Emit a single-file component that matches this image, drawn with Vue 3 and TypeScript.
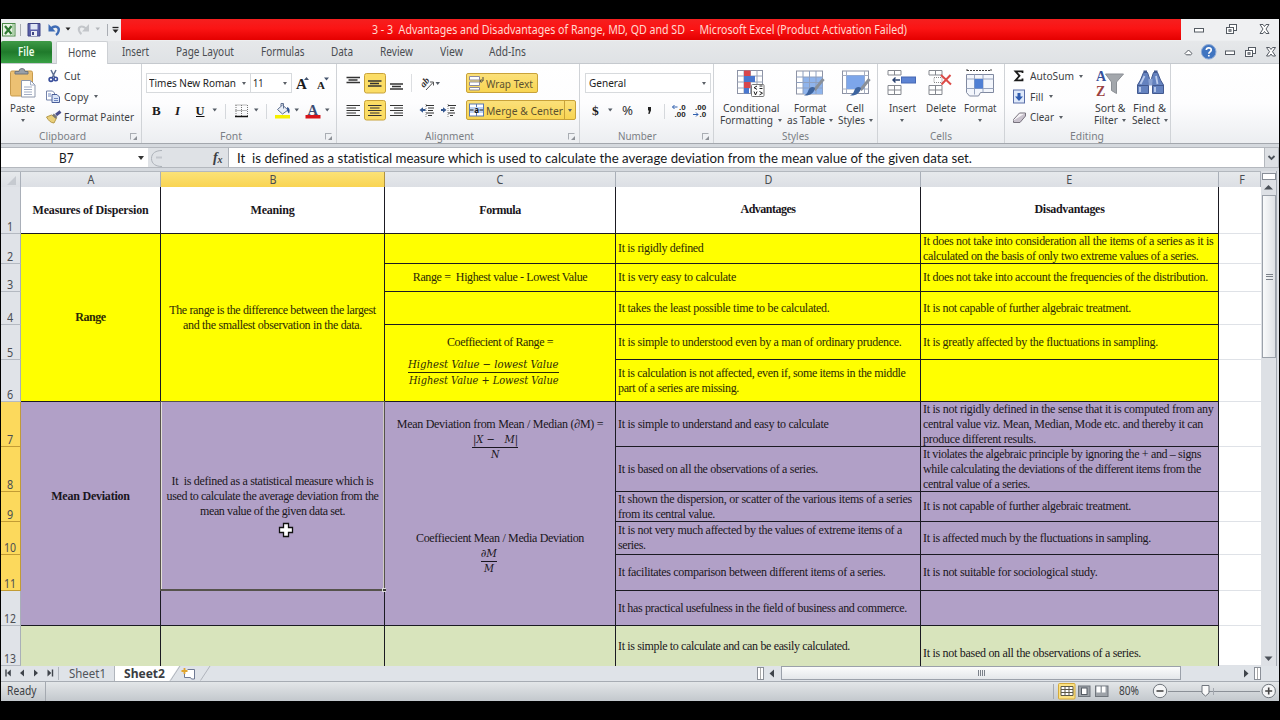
<script setup lang="ts">
type Align = 'center' | 'left'
interface Line { text: string; w: number }
interface Cell {
  area: string
  tone: string
  align: Align
  lines: Line[]
  bold?: boolean
  extra?: string
}

const ln = (text: string, w: number): Line => ({ text, w })
const cell = (area: string, tone: string, align: Align, lines: Line[], extra = '', bold = false): Cell =>
  ({ area, tone, align, lines, extra, bold })

/* Spreads the letters of a label so that it takes a given width in pixels. */
const vFit = {
  mounted(el: HTMLElement, binding: { value: number }) {
    const n = (el.textContent || '').length
    if (!n || !binding.value) return
    const natural = el.getBoundingClientRect().width
    el.style.letterSpacing = ((binding.value - natural) / n).toFixed(3) + 'px'
  },
}

/* Condenses the glyphs of a label to a given width in pixels. */
const vSqueeze = {
  mounted(el: HTMLElement, binding: { value: number }) {
    const natural = el.getBoundingClientRect().width
    if (!natural || !binding.value) return
    el.style.transformOrigin = '0 50%'
    el.style.transform = `scaleX(${(binding.value / natural).toFixed(4)})`
    el.style.marginRight = (binding.value - natural).toFixed(2) + 'px'
  },
}

const caption = '3 - 3  Advantages and Disadvantages of Range, MD, QD and SD  -  Microsoft Excel (Product Activation Failed)'
const formulaText = 'It  is defined as a statistical measure which is used to calculate the average deviation from the mean value of the given data set.'
const deviation = '|X −   M|'

const tabs = [
  { name: 'Insert', w: 27, cls: 't-insert' },
  { name: 'Page Layout', w: 58, cls: 't-page' },
  { name: 'Formulas', w: 43.5, cls: 't-formulas' },
  { name: 'Data', w: 22, cls: 't-data' },
  { name: 'Review', w: 33, cls: 't-review' },
  { name: 'View', w: 23, cls: 't-view' },
  { name: 'Add-Ins', w: 37, cls: 't-addins' },
]

const columns = [
  { name: 'A', on: false }, { name: 'B', on: true }, { name: 'C', on: false },
  { name: 'D', on: false }, { name: 'E', on: false }, { name: 'F', on: false },
]
const rows = Array.from({ length: 13 }, (_, i) => ({ n: i + 1, on: i >= 6 && i <= 10 }))

const cells: Cell[] = [
  cell('1 / 2 / 2 / 3', 'white', 'center', [ln('Measures of Dispersion', 116)], '', true),
  cell('1 / 3 / 2 / 4', 'white', 'center', [ln('Meaning', 44)], '', true),
  cell('1 / 4 / 2 / 5', 'white', 'center', [ln('Formula', 41.5)], '', true),
  cell('1 / 5 / 2 / 6', 'white', 'center', [ln('Advantages', 55)], 'lift', true),
  cell('1 / 6 / 2 / 7', 'white', 'center', [ln('Disadvantages', 70)], 'lift', true),

  cell('2 / 2 / 7 / 3', 'yellow', 'center', [ln('Range', 30.5)], '', true),
  cell('2 / 3 / 7 / 4', 'yellow', 'center', [
    ln('The range is the difference between the largest', 206.5),
    ln('and the smallest observation in the data.', 179)]),
  cell('2 / 4 / 3 / 5', 'yellow', 'center', []),
  cell('3 / 4 / 4 / 5', 'yellow', 'center', [ln('Range =  Highest value - Lowest Value', 174.5)]),
  cell('4 / 4 / 5 / 5', 'yellow', 'center', []),

  cell('2 / 5 / 3 / 6', 'yellow', 'left', [ln('It is rigidly defined', 85.5)]),
  cell('3 / 5 / 4 / 6', 'yellow', 'left', [ln('It is very easy to calculate', 118)]),
  cell('4 / 5 / 5 / 6', 'yellow', 'left', [ln('It takes the least possible time to be calculated.', 211.5)]),
  cell('5 / 5 / 6 / 6', 'yellow', 'left', [ln('It is simple to understood even by a man of ordinary prudence.', 283.5)]),
  cell('6 / 5 / 7 / 6', 'yellow', 'left', [
    ln('It is calculation is not affected, even if, some items in the middle', 287.6),
    ln('part of a series are missing.', 121)]),

  cell('2 / 6 / 3 / 7', 'yellow', 'left', [
    ln('It does not take into consideration all the items of a series as it is', 290.5),
    ln('calculated on the basis of only two extreme values of a series.', 275.5)]),
  cell('3 / 6 / 4 / 7', 'yellow', 'left', [ln('It does not take into account the frequencies of the distribution.', 285)]),
  cell('4 / 6 / 5 / 7', 'yellow', 'left', [ln('It is not capable of further algebraic treatment.', 208)]),
  cell('5 / 6 / 6 / 7', 'yellow', 'left', [ln('It is greatly affected by the fluctuations in sampling.', 235)]),
  cell('6 / 6 / 7 / 7', 'yellow', 'left', []),

  cell('7 / 2 / 12 / 3', 'purple', 'center', [ln('Mean Deviation', 78.5)], 'open', true),
  cell('12 / 2 / 13 / 3', 'purple', 'center', []),
  cell('7 / 3 / 12 / 4', 'purple', 'center', [
    ln('It  is defined as a statistical measure which is', 202),
    ln('used to calculate the average deviation from the', 212),
    ln('mean value of the given data set.', 145)], 'open'),
  cell('12 / 3 / 13 / 4', 'purple', 'center', []),

  cell('7 / 5 / 8 / 6', 'purple', 'left', [ln('It is simple to understand and easy to calculate', 210.5)]),
  cell('8 / 5 / 9 / 6', 'purple', 'left', [ln('It is based on all the observations of a series.', 200)]),
  cell('9 / 5 / 10 / 6', 'purple', 'left', [
    ln('It shown the dispersion, or scatter of the various items of a series', 294),
    ln('from its central value.', 97)]),
  cell('10 / 5 / 11 / 6', 'purple', 'left', [
    ln('It is not very much affected by the values of extreme items of a', 284),
    ln('series.', 27.5)]),
  cell('11 / 5 / 12 / 6', 'purple', 'left', [ln('It facilitates comparison between different items of a series.', 267.5)]),
  cell('12 / 5 / 13 / 6', 'purple', 'left', [ln('It has practical usefulness in the field of business and commerce.', 289)]),

  cell('7 / 6 / 8 / 7', 'purple', 'left', [
    ln('It is not rigidly defined in the sense that it is computed from any', 290.5),
    ln('central value viz. Mean, Median, Mode etc. and thereby it can', 280),
    ln('produce different results.', 113)]),
  cell('8 / 6 / 9 / 7', 'purple', 'left', [
    ln('It violates the algebraic principle by ignoring the + and – signs', 278),
    ln('while calculating the deviations of the different items from the', 278),
    ln('central value of a series.', 107)]),
  cell('9 / 6 / 10 / 7', 'purple', 'left', [ln('It is not capable of further algebraic treatment.', 208)]),
  cell('10 / 6 / 11 / 7', 'purple', 'left', [ln('It is affected much by the fluctuations in sampling.', 228)]),
  cell('11 / 6 / 12 / 7', 'purple', 'left', [ln('It is not suitable for sociological study.', 174.5)]),
  cell('12 / 6 / 13 / 7', 'purple', 'left', []),

  cell('13 / 2 / 14 / 3', 'green', 'center', [], 'open'),
  cell('13 / 3 / 14 / 4', 'green', 'center', [], 'open'),
  cell('13 / 4 / 14 / 5', 'green', 'center', [], 'open'),
  cell('13 / 5 / 14 / 6', 'green', 'left', [ln('It is simple to calculate and can be easily calculated.', 232)], 'open'),
  cell('13 / 6 / 14 / 7', 'green', 'left', [ln('It is not based on all the observations of a series.', 218)], 'open low'),
]
</script>

<template>
  <div class="screen">
    <div class="window">
      <!-- Title bar -->
      <div class="titlebar">
        <div class="qat">
          <svg width="120" height="21" viewBox="1 19 120 21">
            <rect x="2.5" y="23.500" width="12.500" height="12.500" fill="#e9f3e6" stroke="#4c8a4a" />
            <path d="M5 26l6.500 8M11.500 26L5 34" stroke="#2f7a33" stroke-width="2.200" fill="none" />
            <path d="M13 24v12" stroke="#9cc79a" stroke-width="1.500" />
            <path d="M20.500 24v12M107.500 24v12" stroke="#a9adb3" />
            <path d="M28 23.500h12v12.500H28z" fill="#5a5fa8" stroke="#3f4585" />
            <rect x="30.500" y="24" width="7" height="5.500" fill="#dfe6f5" />
            <rect x="31" y="31" width="6" height="5" fill="#e9ecf4" />
            <rect x="32" y="32" width="2" height="3" fill="#3f4585" />
            <path d="M51 28.500c4-3.500 9-2 7.500 3-.4 1.400-1.400 2.700-2.500 3.500" stroke="#3f6cb5" stroke-width="2.400" fill="none" />
            <path d="M48.500 24v7.500h7z" fill="#3f6cb5" />
            <path d="M65.500 27.500h5l-2.500 3z" fill="#222" />
            <path d="M86 28.500c-4-3.500-8-2-7 2 .4 1.400 1.300 2.700 2.500 3.500" stroke="#c3c6ca" stroke-width="2.200" fill="none" />
            <path d="M89 24v7.500h-7z" fill="#c3c6ca" />
            <path d="M95.500 27.500h4.500l-2.300 3z" fill="#b4b7bb" />
            <path d="M112.500 27.500h6" stroke="#222" stroke-width="1.300" />
            <path d="M112.500 29.500h6l-3 3.500z" fill="#222" />
          </svg>
        </div>
        <div class="caption"><span v-squeeze="535">{{ caption }}</span></div>
        <svg class="winbtns" width="98" height="21" viewBox="1180 19 98 21" fill="none" stroke="#555b63">
          <rect x="1193.500" y="28.500" width="9" height="3.500" fill="#fff" />
          <rect x="1228.500" y="24.500" width="7" height="6" fill="#fff" />
          <rect x="1225.500" y="27.500" width="7" height="6" fill="#fff" /><rect x="1228" y="29.700" width="2" height="1.600" />
          <path d="M1259 24.500h3l1.500 2 1.500-2h3l-3 4.500 3 4.500h-3l-1.500-2-1.500 2h-3l3-4.500z" fill="#fff" />
        </svg>
      </div>

      <!-- Ribbon tabs -->
      <div class="tabs">
        <div class="file"><span v-squeeze="16.500">File</span></div>
        <div class="home"><span v-squeeze="28">Home</span></div>
        <div v-for="t in tabs" :key="t.name" class="tab" :class="t.cls"><span v-squeeze="t.w">{{ t.name }}</span></div>
        <svg class="tabbtns" width="98" height="23" viewBox="1180 41 98 23" fill="none" stroke="#555b63">
          <path d="M1184 53.500l3.500-3.500 3.500 3.500-1.300 1.300h-4.400z" fill="#fff" />
          <circle cx="1207.700" cy="51.800" r="7.300" fill="#3f74c0" stroke="#8fabd6" />
          <path d="M1205.300 50c.2-3 5.200-2.800 4.900.2-.2 1.700-2.400 1.700-2.400 3.600M1207.800 55v1.400" stroke="#fff" stroke-width="1.700" />
          <rect x="1224.500" y="51" width="9" height="3.500" fill="#fff" />
          <rect x="1247.500" y="47.500" width="7" height="6" fill="#fff" />
          <rect x="1244.500" y="50.500" width="7" height="6" fill="#fff" /><rect x="1247" y="52.700" width="2" height="1.600" />
          <path d="M1265.500 47.500h3l1.500 2 1.500-2h3l-3 4.200 3 4.300h-3l-1.500-2-1.500 2h-3l3-4.300z" fill="#fff" />
        </svg>
      </div>

      <!-- Ribbon -->
      <div class="ribbon">
        <div class="group g-clipboard">
          <div class="body">
            <div class="big paste">
              <svg width="28" height="30" viewBox="10 68 28 30">
                <rect x="11.500" y="71" width="22" height="25" rx="1.500" fill="#ecc173" stroke="#c79a4c" />
                <path d="M16 74v-2.500h4a3 3 0 0 1 6 0h3V74z" fill="#9aa0a8" stroke="#6f757d" />
                <path d="M22.500 80.500h9l4.500 4.500v12H22.500z" fill="#fff" stroke="#8d97ab" />
                <path d="M31.500 80.500V85H36M25 87h8M25 89.500h8M25 92h8M25 94.500h8" stroke="#a3aec5" fill="none" />
              </svg>
              <span v-squeeze="25">Paste</span><i class="dd"></i>
            </div>
            <div class="list">
              <div class="item"><svg width="18" height="16" viewBox="45 68 18 16"><path d="M51 70l4 8M56 70l-4 8" stroke="#5d6f92" stroke-width="1.500" /><circle cx="51" cy="79.500" r="1.900" fill="none" stroke="#3a4f9c" stroke-width="1.600" /><circle cx="55.700" cy="79" r="1.700" fill="none" stroke="#3a4f9c" stroke-width="1.600" /></svg><span v-squeeze="16.500">Cut</span></div>
              <div class="item"><svg width="18" height="16" viewBox="45 89 18 16"><path d="M46.500 91h6l2 2v7h-8z" fill="#fff" stroke="#7382aa" /><path d="M52 94.500h5l2.500 2.500v5.500H52z" fill="#dbe5f7" stroke="#4a5f9a" /><path d="M48 94h3M48 96h3M54 98.500h4M54 100.500h4" stroke="#6f86c0" /></svg><span v-squeeze="24.500">Copy</span><i class="dd"></i></div>
              <div class="item"><svg width="18" height="16" viewBox="45 109 18 16"><path d="M46.500 117l5-2 5 3-2.500 5c-3.500-.3-5.500-2.500-7.500-6z" fill="#e9cf7a" stroke="#b69a4a" /><path d="M53 114.500l3.500 3.300" stroke="#777" stroke-width="2.500" /><path d="M56 115l4.500-3.500" stroke="#4a4f8c" stroke-width="3" /></svg><span v-squeeze="70">Format Painter</span></div>
            </div>
          </div>
          <div class="label"><span v-squeeze="47">Clipboard</span><b class="launch"></b></div>
        </div>

        <div class="group g-font">
          <div class="body col">
            <div class="row r1">
              <div class="combo c-name"><span v-squeeze="87">Times New Roman</span><i class="dd"></i></div>
              <div class="combo c-size"><span v-squeeze="10.500">11</span><i class="dd"></i></div>
              <svg width="40" height="20" viewBox="294 73 40 20"><text x="296" y="89" class="serif-b" font-size="15">A</text><text x="317" y="89" class="serif-b" font-size="11">A</text><path d="M304 80l2.500-3 2.500 3zM324 77.500h5l-2.500 3z" fill="#46556e" /></svg>
            </div>
            <svg class="row" width="190" height="24" viewBox="146 98 190 24">
              <text x="152" y="115" class="serif-b" font-size="13">B</text>
              <text x="175" y="115" class="serif-i" font-size="13">I</text>
              <text x="195.500" y="114.500" class="serif-b" font-size="12.500">U</text><path d="M196 116.500h8.500" stroke="#111" />
              <path d="M212.500 108.500h4.500l-2.300 3zM254 108.500h4.500l-2.300 3zM294.500 108.500h4.500l-2.300 3zM325 108.500h4.500l-2.300 3z" fill="#555c66" />
              <path d="M225.500 104v15M266.500 104v15" stroke="#d5d8dc" />
              <path d="M235.500 105h12M235.500 110.500h12M236 105v11M241.500 105v11M247.500 105v11" stroke="#777" stroke-dasharray="1 1" fill="none" />
              <path d="M235 116.500h13" stroke="#111" stroke-width="1.500" />
              <path d="M277.500 109.500l5-4.500 5.500 5-5.500 4z" fill="#e8edf6" stroke="#5e6f8f" /><path d="M281 106v-2.500h2.500v5" fill="none" stroke="#5e6f8f" /><path d="M287 107c3 1 3 4 2 6.500-1.500-1-2-3-2-6.500z" fill="#36558f" />
              <rect x="275" y="115" width="15" height="3.500" fill="#f6f000" />
              <text x="307.500" y="114.500" class="serif-b navy" font-size="14.500">A</text>
              <rect x="305.500" y="115" width="15" height="3.500" fill="#d7141a" />
            </svg>
          </div>
          <div class="label"><span v-squeeze="22">Font</span><b class="launch"></b></div>
        </div>

        <div class="group g-align">
          <div class="body">
            <svg width="124" height="59" viewBox="337 64 124 59">
              <rect x="364.500" y="73.500" width="21" height="19.500" rx="2" fill="#fbdd66" stroke="#c8a23a" />
              <rect x="364.500" y="100.500" width="21" height="19.500" rx="2" fill="#fbdd66" stroke="#c8a23a" />
              <path d="M346.500 77.500h13.500M348.500 80h9M346.500 82.500h13.500M368 81h13.500M370 83.500h9M368 86h13.500M390 84h13M392 86.500h9M390 89h13" stroke="#333" stroke-width="1.300" />
              <path d="M346.500 105.500h13.500M346.500 108h9.500M346.500 110.500h13.500M346.500 113h9.500M346.500 115.500h13.500M368 105.500h13.500M370 108h9.500M368 110.500h13.500M370 113h9.500M368 115.500h13.500M390 105.500h13M394 108h9M390 110.500h13M394 113h9M390 115.500h13" stroke="#333" stroke-width="1.100" />
              <path d="M411.500 74v18" stroke="#dcdee1" />
              <text x="0" y="0" transform="translate(424 88) rotate(-50)" class="ab" font-size="9.500">ab</text>
              <path d="M426 90l7-7.500M430 82h3.500v3.500" stroke="#555" fill="none" /><path d="M435.500 82h4.500l-2.300 3z" fill="#555c66" />
              <path d="M426 105.500h8M428 108h6M428 110.500h5M426 113h8M428 115.500h4M448 105.500h8M450 108h5M450 110.500h4M448 113h7M450 115.500h3" stroke="#333" stroke-width="1.100" />
              <path d="M426 104v14M448 104v14" stroke="#888" stroke-dasharray="1 1" /><path d="M419.500 110l3.500-2.800v1.800h2.500v2H423v1.800zM446.500 110l-3.500-2.800v1.800h-2v2h2v1.800z" fill="#34578f" />
            </svg>
            <div class="wraps">
              <div class="hot wrap"><svg width="17" height="16" viewBox="468 75 17 16"><path d="M469.500 76.500h10v3.500h-10zM469.500 82h10v3.500h-10zM469.500 87.500h10v2.500h-10z" fill="#fff" stroke="#8c8aa0" /><path d="M483 77v4h-3M481.500 79.500l-2 1.500 2 1.500" stroke="#444" fill="none" /></svg><span v-squeeze="47">Wrap Text</span></div>
              <div class="hot merge"><svg width="17" height="16" viewBox="468 102 17 16"><rect x="469.500" y="104" width="14" height="12" fill="#fff" stroke="#5878b4" /><path d="M470 107h13v6h-13z" fill="#bcd2f4" /><path d="M476.500 104v3M476.500 113v3" stroke="#5878b4" /><path d="M470 110h3.500M483 110h-3.500" stroke="#222" /><text x="474.300" y="113" font-size="8" font-weight="bold" fill="#111">a</text></svg><span v-squeeze="77">Merge &amp; Center</span><em><i class="dd"></i></em></div>
            </div>
          </div>
          <div class="label"><span v-squeeze="49">Alignment</span><b class="launch"></b></div>
        </div>

        <div class="group g-number">
          <div class="body col">
            <div class="row r1"><div class="combo c-fmt"><span v-squeeze="37">General</span><i class="dd"></i></div></div>
            <svg class="row" width="128" height="24" viewBox="584 98 128 24">
              <text x="592" y="115" class="serif-b" font-size="13.500">$</text><path d="M608 108.500h4.500l-2.300 3z" fill="#555c66" />
              <text x="622" y="115" class="ui" font-size="13" textLength="11" lengthAdjust="spacingAndGlyphs">%</text>
              <path d="M648 107h3v3.500l-1.500 3.500h-1.200l.6-3.500h-.9z" fill="#222" />
              <path d="M664.500 104v15" stroke="#d5d8dc" />
              <text x="679" y="109.500" class="tiny">.0</text><text x="674.500" y="117" class="tiny">.00</text>
              <path d="M672.500 107h5M674.500 105l-2 2 2 2" stroke="#2f5fae" fill="none" />
              <text x="695" y="109.500" class="tiny">.00</text><text x="699.500" y="117" class="tiny">.0</text>
              <path d="M693 114.500h5M696 112.500l2 2-2 2" stroke="#2f5fae" fill="none" />
            </svg>
          </div>
          <div class="label"><span v-squeeze="38.500">Number</span><b class="launch"></b></div>
        </div>

        <div class="group g-styles">
          <div class="body">
            <div class="big b-cf">
              <svg width="30" height="30" viewBox="735 68 30 30"><rect x="736.500" y="70.500" width="25" height="23" fill="#fff" stroke="#8d93a5" /><path d="M736.500 76h25M736.500 82h25M736.500 88h25M743 70.500v23M749.500 70.500v23M756 70.500v23" stroke="#9aa4b8" /><path d="M743 70.500h6.500V76H743zM743 82h6.500v6H743z" fill="#d8474c" /><path d="M743 76h11v6h-11zM743 88h5v5.500h-5z" fill="#4877cf" /><rect x="750.500" y="84.500" width="12.500" height="12" rx="1" fill="#fff" stroke="#777" /><path d="M756 86l-3 1.700 3 1.700M758.500 86h3M758.500 88.500h3M753 91.500l1.500 3.500 1.500-3.500M758.500 91.500l3 1.700-3 1.700" stroke="#222" fill="none" /></svg>
              <span v-squeeze="56.500">Conditional</span><div><span v-squeeze="53">Formatting</span><i class="dd"></i></div>
            </div>
            <div class="big b-ft">
              <svg width="30" height="30" viewBox="794 68 30 30"><rect x="795.500" y="71" width="26" height="23" fill="#fff" stroke="#8d93a5" /><path d="M802 77h19.500v17H802z" fill="#8fb4ec" /><path d="M795.500 77h26M795.500 82.500h26M795.500 88h26M802 71v23M808.500 71v23M815 71v23" stroke="#8ea0c0" /><path d="M822.500 79l-9 11" stroke="#8a9099" stroke-width="3" /><path d="M814 88c-1 5-5 8-11 7.500 3-1.500 3.500-3 4.500-5.500s4-4 6.500-2z" fill="#3d649f" /></svg>
              <span v-squeeze="32.500">Format</span><div><span v-squeeze="38">as Table</span><i class="dd"></i></div>
            </div>
            <div class="big b-cs">
              <svg width="30" height="30" viewBox="839 68 30 30"><rect x="840.500" y="71" width="26" height="22.500" fill="#fff" stroke="#8d93a5" /><path d="M844.500 71v22.500M862.500 71v22.500M840.500 75.500h26M840.500 89h26" stroke="#a6aec0" /><path d="M844.500 75.500h18V89h-18z" fill="#7da6ea" /><path d="M867.500 79l-9 11" stroke="#8a9099" stroke-width="3" /><path d="M859 88c-1 5-5 8-11 7.500 3-1.500 3.500-3 4.500-5.500s4-4 6.500-2z" fill="#3d649f" /></svg>
              <span v-squeeze="18">Cell</span><div><span v-squeeze="27">Styles</span><i class="dd"></i></div>
            </div>
          </div>
          <div class="label"><span v-squeeze="27">Styles</span></div>
        </div>

        <div class="group g-cells">
          <div class="body">
            <div class="big b-in">
              <svg width="30" height="30" viewBox="887 68 30 30"><path d="M888 70.500h13v4.500h-13zM888 85.500h13v9h-13zM894.500 70.500V75M894.500 85.500v9M888 90h13" fill="#fff" stroke="#85888f" /><rect x="901.500" y="77" width="14" height="6" fill="#5c83d3" stroke="#4668b4" /><path d="M893 80h7M895.500 77.500L893 80l2.500 2.500" stroke="#29406f" fill="none" stroke-width="1.400" /></svg>
              <span v-squeeze="27">Insert</span><i class="dd"></i>
            </div>
            <div class="big b-de">
              <svg width="30" height="30" viewBox="927 68 30 30"><path d="M930 70.500h13v4.500h-13zM930 85.500h13v9h-13zM936.500 70.500V75M936.500 85.500v9M930 90h13" fill="#fff" stroke="#85888f" /><path d="M935 77.500h8v5h-8z" fill="none" stroke="#888" stroke-dasharray="1 1" /><path d="M942 75l10 9.500M951.500 75l-9 9.500" stroke="#dc4b47" stroke-width="2" /></svg>
              <span v-squeeze="30">Delete</span><i class="dd"></i>
            </div>
            <div class="big b-fo">
              <svg width="30" height="30" viewBox="965 68 30 30"><path d="M967 70.500h24M967 69v3M991 69v3" stroke="#444" stroke-dasharray="2 1" /><path d="M966.500 74.500h27v18h-13l-2 3.500h-9l-3-3.500z" fill="#f3f6fc" stroke="#8089a0" /><path d="M966.500 79h27M966.500 88.500h27M974.500 74.500v20M983 74.500v18" stroke="#99a5be" /><path d="M974.500 79h8.500v9.500h-8.500z" fill="#4f7fd4" /></svg>
              <span v-squeeze="32.500">Format</span><i class="dd"></i>
            </div>
          </div>
          <div class="label"><span v-squeeze="22">Cells</span></div>
        </div>

        <div class="group g-edit">
          <div class="body">
            <div class="list">
              <div class="item"><svg width="20" height="16" viewBox="1010 68 20 16"><path d="M1022.500 73v-1.700h-7l4 4.500-4 4.500h7v-1.700" fill="none" stroke="#1a1a1a" stroke-width="1.800" /></svg><span v-squeeze="44">AutoSum</span><i class="dd"></i></div>
              <div class="item"><svg width="20" height="16" viewBox="1010 89 20 16"><rect x="1013.500" y="90" width="11" height="13" fill="#dfe9fa" stroke="#5b6fa8" /><path d="M1017.500 93h3v3.500h2.500l-4 4.500-4-4.500h2.500z" fill="#2f5cb0" /></svg><span v-squeeze="13.500">Fill</span><i class="dd"></i></div>
              <div class="item"><svg width="20" height="16" viewBox="1010 109 20 16"><path d="M1013.500 119.500l6-6.500h6l-5.500 7.500h-6z" fill="#f6f3f6" stroke="#77727d" /><path d="M1013.500 120.500v2h6.500l5.500-6.500v-3" fill="#c9c2cd" stroke="#77727d" /></svg><span v-squeeze="24">Clear</span><i class="dd"></i></div>
            </div>
            <div class="big b-so">
              <svg width="30" height="30" viewBox="1091 68 30 30"><path d="M1101.500 74h18l-7 8v11.500l-5-3V82z" fill="#a3a7ac" stroke="#8b8f95" /><text x="1092" y="81" class="az" fill="#35509b">A</text><text x="1092" y="96" class="az" fill="#9b4040">Z</text></svg>
              <span v-squeeze="30.500">Sort &amp;</span><div><span v-squeeze="24">Filter</span><i class="dd"></i></div>
            </div>
            <div class="big b-fi">
              <svg width="30" height="30" viewBox="1130 68 30 30"><path d="M1138.500 72.500h4l2 6v3l-1 4v8h-11V85l3-5zM1148.500 72.500h4l3 7.500 3 5v8.500h-11v-8l-1-4v-3z" fill="#6482bf" stroke="#42598f" /><path d="M1143.500 79h4v6.500h-4z" fill="#8aa2d2" /><path d="M1138.500 71.500h3.500M1149 71.500h3.500" stroke="#42598f" stroke-width="2" /><path d="M1139.500 76l-4 8M1151 76l1.500 8M1135 87v5M1150 87v5" stroke="#bccdee" stroke-width="1.800" /><path d="M1132.500 85.500h11M1147.500 85.500h11" stroke="#42598f" /></svg>
              <span v-squeeze="33">Find &amp;</span><div><span v-squeeze="28">Select</span><i class="dd"></i></div>
            </div>
          </div>
          <div class="label"><span v-squeeze="34">Editing</span></div>
        </div>
      </div>

      <!-- Formula bar -->
      <div class="fbar">
        <div class="namebox"><span v-squeeze="14.500">B7</span><i class="dd"></i></div>
        <div class="fx"><svg width="14" height="18"><path d="M13 1.500C7 1.500 2.500 4 2.500 9.500S7 17.500 13 17.500" fill="none" stroke="#adb2b9" /><path d="M7 8.500h6" stroke="#c3c7cd" stroke-width="2" /></svg><span class="f">f</span><span class="x">x</span></div>
        <div class="field"><span v-squeeze="735">{{ formulaText }}</span></div>
        <div class="expand"><svg width="13" height="20"><path d="M3.500 8l3 3 3-3" fill="none" stroke="#4c525a" stroke-width="1.800" /></svg></div>
      </div>

      <!-- Sheet -->
      <div class="main">
        <div class="sheetwrap">
          <div class="cols">
            <div class="corner"><svg width="20" height="15"><path d="M15 4v9H6z" fill="#c6cad0" /></svg></div>
            <div v-for="c in columns" :key="c.name" class="ch" :class="{ on: c.on, last: c.name === 'F' }"><span>{{ c.name }}</span></div>
          </div>
          <div class="grid">
            <div v-for="r in rows" :key="'r' + r.n" class="rh" :class="{ on: r.on }" :style="{ gridArea: `${r.n} / 1 / ${r.n + 1} / 2` }"><span v-squeeze="r.n > 9 ? 12 : 6.200">{{ r.n }}</span></div>
            <div v-for="r in rows" :key="'f' + r.n" class="blank" :style="{ gridArea: `${r.n} / 7 / ${r.n + 1} / 8` }"></div>
            <div v-for="c in cells" :key="c.area" class="cell" :class="[c.tone, c.align, c.extra, { bold: c.bold }]" :style="{ gridArea: c.area }">
              <span v-for="l in c.lines" :key="l.text" v-fit="l.w">{{ l.text }}</span>
            </div>
            <div class="cell yellow center formula-range">
              <span v-fit="106">Coeffiecient of Range =</span>
              <div class="frac wide">
                <span v-squeeze="150.500">Highest Value − lowest Value</span>
                <span class="den" v-squeeze="149.500">Highest Value + Lowest Value</span>
              </div>
            </div>
            <div class="cell purple center formula-md">
              <span v-fit="206.500">Mean Deviation from Mean / Median (∂M) =</span>
              <div class="frac mid">
                <span v-squeeze="45">{{ deviation }}</span>
                <span class="den" v-squeeze="8.500">N</span>
              </div>
              <span class="cmd" v-fit="168">Coeffiecient Mean / Media Deviation</span>
              <div class="frac small">
                <span v-squeeze="16">∂M</span>
                <span class="den" v-squeeze="10">M</span>
              </div>
            </div>
            <div class="selection"><b></b></div>
          </div>
        </div>
        <div class="vscroll">
          <div class="split"></div>
          <svg width="16" height="15"><path d="M3 9.500l4.500-4.500 4.500 4.500z" fill="#4b5058" /></svg>
          <div class="thumb"><i></i><i></i><i></i></div>
          <div class="space"></div>
          <svg width="16" height="15"><path d="M3.500 5.500l4 4.500 4-4.500z" fill="#4b5058" /></svg>
        </div>
        <div class="edge"></div>
      </div>

      <!-- Sheet tabs -->
      <div class="sheets">
        <svg width="58" height="15" viewBox="1 666 58 15"><path d="M10.800 669.500v7L7 673zM24 669.500v7l-4-3.500zM34 669.500v7l4-3.500zM47.500 669.500v7l3.800-3.500z" fill="#3f444b" /><path d="M6 669.500v7M52.500 669.500v7" stroke="#3f444b" stroke-width="1.400" /><path d="M58.500 667v13" stroke="#b0b5bc" /></svg>
        <div class="s1"><span v-squeeze="37">Sheet1</span></div>
        <div class="s2"><span v-squeeze="41">Sheet2</span></div>
        <svg width="44" height="15" viewBox="169 666 44 15"><path d="M169 666h10l-9.500 14.500h-.5z" fill="#fff" /><path d="M180 666l-9.500 14.500M210 666l-9.500 14.500" stroke="#b0b5bc" /><path d="M184.500 671v6.500h6l1 1.500h3v-9.500h-7" fill="#fff" stroke="#6e7993" /><path d="M184.500 668v6M181.500 671h6" stroke="#e0a52e" stroke-width="1.800" /></svg>
        <div class="gap"></div>
        <div class="hsplit"></div>
        <svg width="17" height="15"><path d="M10 3.500v8L5.500 7.500z" fill="#3f444b" /></svg>
        <div class="hthumb"><i></i><i></i><i></i><i></i></div>
        <svg class="hright" width="73" height="15"><path d="M63 3.500v8l4.500-4z" fill="#3f444b" /></svg>
        <div class="hsplit"></div>
      </div>

      <!-- Status bar -->
      <div class="status">
        <div class="ready"><span v-squeeze="29.500">Ready</span></div>
        <svg width="58" height="19" viewBox="1053 682 58 19">
          <path d="M1053.500 684v15" stroke="#a4a9b0" />
          <rect x="1058.500" y="683.500" width="16.500" height="15.500" rx="1" fill="#fbe283" stroke="#d4a93a" />
          <path d="M1061 686.500h12v9h-12zM1061 689.500h12M1061 692.500h12M1065 686.500v9M1069 686.500v9" stroke="#5c5848" fill="#fff" />
          <rect x="1078.500" y="686" width="11.500" height="10.500" fill="#9da2a8" stroke="#6f757c" /><rect x="1081.500" y="688" width="5.500" height="6.500" fill="#fff" stroke="#555b63" />
          <rect x="1095.500" y="686" width="12.500" height="10.500" fill="#9da2a8" stroke="#6f757c" /><path d="M1096.500 686.500h4v6h-4zM1102 686.500h3.500v6h-3.500z" fill="#fff" />
        </svg>
        <div class="pct"><span v-squeeze="20">80%</span></div>
        <svg width="128" height="19" viewBox="1150 682 128 19">
          <path d="M1168 691.500h92" stroke="#8b9097" /><path d="M1213.500 688v7" stroke="#a4a9b0" />
          <circle cx="1160" cy="691" r="6.700" fill="#f4f5f6" stroke="#6f757c" /><path d="M1156.500 691h7" stroke="#444" stroke-width="1.600" />
          <circle cx="1268.700" cy="691" r="6.700" fill="#f4f5f6" stroke="#6f757c" /><path d="M1265.200 691h7M1268.700 687.500v7" stroke="#444" stroke-width="1.600" />
          <path d="M1202 685.500h7v7.500l-3.500 3-3.500-3z" fill="#fafafa" stroke="#6f757c" />
        </svg>
      </div>
    </div>
    <svg class="cursor" width="16" height="16"><path d="M5.500 1.500h5v4h4v5h-4v4h-5v-4h-4v-5h4z" fill="#fff" stroke="#111" stroke-width="1.300" /></svg>
  </div>
</template>

<style>
html, body { margin: 0; background: #000; }
</style>

<style scoped>
* { box-sizing: border-box; }
svg { display: block; flex: none; }
span { display: inline-block; white-space: pre; flex: none; }
.screen { position: relative; width: 1280px; height: 720px; overflow: hidden; background: #000; font-family: "Noto Sans", "Open Sans", sans-serif; font-size: 11.5px; color: #3c3f44; }
.window { width: 1278px; margin: 0 0 0 1px; padding-top: 19px; display: flex; flex-direction: column; }

.titlebar { display: flex; align-items: flex-start; height: 22px; background: #eceef0; flex: none; }
.qat { width: 120px; flex: none; }
.caption { width: 1060px; height: 21px; background: linear-gradient(#f51f1f, #fb1414 45%, #e40000); color: #ffd9d0; display: flex; justify-content: center; padding-right: 22px; line-height: 21px; font-size: 12px; }
.winbtns { background: #eff0f2; }

.tabs { display: flex; height: 23px; background: linear-gradient(#e6e8ea, #dfe2e5); border-bottom: 1px solid #c5c9ce; line-height: 22px; flex: none; font-size: 12px; color: #4a4d52; }
.file { width: 51px; height: 22px; border-radius: 2px 2px 0 0; background: linear-gradient(#3f9a47, #1f7a2b 50%, #38a044); color: #eaffea; display: flex; justify-content: center; line-height: 22px; font-weight: 600; }
.home { width: 52px; height: 23px; margin-left: 4px; background: #fff; border: 1px solid #cdd0d4; border-bottom: 0; border-radius: 2px 2px 0 0; display: flex; justify-content: center; line-height: 21px; }
.tab { flex: none; display: flex; }
.t-insert { margin-left: 14px; width: 54px; }
.t-page { width: 85px; }
.t-formulas { width: 70px; }
.t-data { width: 49px; }
.t-review { width: 60px; }
.t-view { width: 49px; }
.t-addins { width: 60px; }
.tabbtns { margin-left: auto; }

.ribbon { display: flex; height: 80px; flex: none; background: linear-gradient(#fff, #fdfdfe 50%, #eceef1); border-bottom: 1px solid #a3a7ad; }
.group { display: flex; flex-direction: column; border-right: 1px solid #d0d3d7; flex: none; overflow: hidden; }
.g-clipboard { width: 141px; }
.g-font { width: 195px; }
.g-align { width: 243px; }
.g-number { width: 134px; }
.g-styles { width: 164px; }
.g-cells { width: 127px; }
.g-edit { width: 166px; }
.body { height: 63px; display: flex; flex: none; }
.body.col { flex-direction: column; }
.label { display: flex; justify-content: center; height: 16px; line-height: 17px; color: #7a7e84; position: relative; }
.g-clipboard .label { padding-right: 18px; }
.g-font .label, .g-align .label { padding-right: 17px; }
.g-number .label { padding-right: 18px; }
.launch { position: absolute; right: 4px; top: 6px; width: 7px; height: 7px; border: 1px solid #a9adb3; border-right-color: transparent; border-bottom-color: transparent; }
.launch::after { content: ""; position: absolute; right: -1px; bottom: -1px; border: 2.5px solid; border-color: transparent #8d9197 #8d9197 transparent; }
.dd { display: inline-block; flex: none; width: 0; height: 0; border: 2.5px solid transparent; border-top: 3px solid #5a5f66; border-bottom: 0; }

.big { display: flex; flex-direction: column; align-items: center; flex: none; padding-top: 4px; }
.big > span, .big > div { height: 12px; line-height: 12px; }
.big > span { margin-top: 4px; }
.big > div { display: flex; align-items: center; gap: 4px; }
.big > .dd { margin-top: 5px; }
.paste { width: 43px; }
.b-cf { width: 72px; margin-left: 1px; }
.b-ft { width: 46px; }
.b-cs { width: 45px; }
.b-in { width: 36px; margin-left: 6px; }
.b-de { width: 42px; }
.b-fo { width: 36px; }
.b-so { width: 34px; }
.b-fi { width: 40px; margin-left: 3px; }

.list { padding-top: 2px; }
.item { display: flex; align-items: center; height: 20.5px; }
.item span { line-height: 16px; }
.item .dd { margin-left: 5px; }
.g-clipboard .item svg { margin-right: 1px; margin-left: 1px; }
.g-clipboard .list { flex: 1; }
.g-edit .list { width: 84px; margin-left: 5px; }

.row { flex: none; }
.r1 { display: flex; height: 20px; margin-top: 9px; margin-bottom: 5px; margin-left: 4px; }
.g-font > .body > svg.row { margin-left: 4px; }
.g-number > .body > svg.row { margin-left: 4px; }
.combo { display: flex; align-items: center; justify-content: space-between; border: 1px solid #d7dadd; background: #fff; padding: 0 4px 0 2px; color: #222; height: 20px; line-height: 18px; }
.c-name { width: 105px; }
.c-size { width: 41px; border-left: 0; margin-right: 2px; }
.c-fmt { width: 126px; padding-left: 3px; margin-left: 1px; }
.serif-b { font-family: "Liberation Serif", serif; font-weight: bold; fill: #1b1b1b; }
.serif-i { font-family: "Liberation Serif", serif; font-weight: bold; font-style: italic; fill: #1b1b1b; }
.navy { fill: #3d4c73; }
.ab { font-family: "Liberation Serif", serif; font-style: italic; font-weight: bold; fill: #333; }
.ui { font-family: "Noto Sans", sans-serif; fill: #333; }
.tiny { font-family: "Liberation Sans", sans-serif; font-size: 8px; font-weight: bold; fill: #222; }
.az { font-family: "Liberation Serif", serif; font-size: 14px; font-weight: bold; }

.wraps { display: flex; flex-direction: column; gap: 7px; padding: 9px 0 0 5px; }
.hot { display: flex; align-items: center; height: 20px; border: 1px solid #c8a23a; border-radius: 2px; background: linear-gradient(#fbe07a, #f8d552); padding-left: 1px; color: #5c5130; }
.hot span { margin-left: 1px; }
.wrap { width: 72px; }
.merge { width: 110px; }
.merge em { align-self: stretch; display: flex; align-items: center; margin-left: 1px; padding-left: 3px; border-left: 1px solid #c8a23a; }

.fbar { display: flex; height: 27px; flex: none; background: #d5d9de; padding: 3px 0 3px 0; font-family: Lato, "Open Sans", sans-serif; color: #16181c; }
.namebox { width: 147px; background: #fff; display: flex; align-items: center; font-size: 13px; border-top: 1px solid #b4b8be; border-bottom: 1px solid #b4b8be; }
.namebox span { margin-left: 58px; }
.namebox .dd { margin-left: auto; margin-right: 4px; border-width: 3.500px; border-top-width: 4px; border-bottom: 0; border-top-color: #333; }
.fx { width: 81px; display: flex; align-items: center; border-right: 1px solid #aeb3ba; border-top: 1px solid #b4b8be; border-bottom: 1px solid #b4b8be; background: #dfe2e6; padding-left: 1px; font-family: "Liberation Serif", serif; font-style: italic; font-weight: bold; color: #3b3e44; }
.fx .f { margin-left: 50px; font-size: 14px; }
.fx .x { font-size: 10px; padding-top: 4px; }
.field { width: 1036px; background: #fff; line-height: 20px; padding-left: 8px; font-size: 14px; border-top: 1px solid #b4b8be; border-bottom: 1px solid #b4b8be; display: flex; font-variant-ligatures: none; }
.expand { flex: 1; background: #dde0e4; border: 1px solid #b4b8be; }

.main { display: flex; height: 495px; flex: none; }
.sheetwrap { width: 1260px; flex: none; background: #fff; }
.cols { display: grid; grid-template-columns: 20px 140px 224px 231px 305px 298px 42px; height: 16px; border-top: 1px solid #b3b8be; }
.ch, .corner { background: linear-gradient(#e6e9ec, #dcdfe4); border-right: 1px solid #a9afb8; border-bottom: 1px solid #b9bec5; text-align: center; line-height: 15px; font-size: 12px; color: #4a4d52; font-family: "Noto Sans", sans-serif; }
.ch span { transform: scaleX(.9); }
.ch.last { padding-left: 6px; }
.ch.on { background: linear-gradient(#fbe277, #f9d452); border-color: #b09240; }
.grid { display: grid; grid-template-columns: 20px 140px 224px 231px 305px 298px 42px; grid-template-rows: 47px 30px 28px 33px 35px 42px 45px 45px 30px 33px 36px 35px 40px; height: 479px; overflow: hidden; }
.rh { background: #e0e3e8; border-right: 1px solid #a9afb8; border-bottom: 1px solid #b4b9c1; display: flex; align-items: flex-end; justify-content: center; line-height: 12px; font-family: "Noto Sans", sans-serif; font-size: 12px; color: #4a4d52; }
.rh.on { background: #fcd95c; border-color: #c29c35; }
.blank { border-bottom: 1px solid #dfe2e7; background: #fff; }
.cell { display: flex; flex-direction: column; justify-content: center; border-right: 1px solid #1b1a22; border-bottom: 1px solid #1b1a22; font-family: "Liberation Serif", serif; font-size: 12px; color: #1a1620; min-width: 0; overflow: hidden; }
.cell span { line-height: 15px; }
.cell.center { align-items: center; }
.cell.left { align-items: flex-start; padding-left: 2px; }
.cell.bold { font-weight: bold; }
.cell.open { border-bottom: 0; }
.cell.lift { padding-bottom: 1px; }
.cell.low { padding-top: 15px; }
.white { background: #fff; }
.yellow { background: #ffff00; color: #2c2a06; }
.purple { background: #b1a0c7; }
.green { background: #d8e4bc; }

.formula-range { grid-area: 5 / 4 / 7 / 5; justify-content: flex-start; padding-top: 10px; }
.formula-md { grid-area: 7 / 4 / 13 / 5; justify-content: flex-start; padding-top: 15px; }
.frac { display: flex; flex-direction: column; align-items: center; font-family: "DejaVu Serif Condensed", "DejaVu Serif", serif; font-style: italic; font-size: 11px; }
.frac span, .frac .den { line-height: 14px; }
.wide { width: 151px; margin-top: 8px; margin-right: 33px; }
.wide .den { margin-top: 1px; }
.frac::before { content: ""; order: 1; align-self: stretch; height: 1px; background: currentColor; }
.frac .den { order: 2; }
.mid { width: 46px; margin-right: 10px; margin-top: 1px; }
.cmd { margin-top: 69px; }
.small { width: 16px; margin-right: 22px; margin-top: 1px; }

.selection { grid-area: 7 / 3 / 12 / 4; margin: -1px 0 0 -1px; border: 1px solid #55524c; border-bottom-width: 2px; box-shadow: inset 1px 0 0 #e4e0d6, inset -1px 0 0 #cfc9c4; position: relative; z-index: 2; }
.selection b { position: absolute; right: -2px; bottom: -3px; width: 4px; height: 4px; background: #3f3d38; border: 1px solid #ddd; border-right: 0; }

.vscroll { width: 16px; display: flex; flex-direction: column; background: #dde0e5; border-right: 1px solid #a5abb3; }
.edge { flex: 1; background: #dde0e5; }
.split { height: 7px; margin: 2px 0 0 1px; width: 14px; background: #fff; border: 1px solid #888e97; flex: none; }
.thumb { height: 163px; width: 14px; margin-left: 1px; border: 1px solid #9ba1aa; background: linear-gradient(90deg, #f9fafb, #dfe2e6); display: flex; flex-direction: column; align-items: center; justify-content: center; gap: 1.500px; flex: none; }
.thumb i { width: 7px; height: 1px; background: #7b8189; }
.space { flex: 1; }

.sheets { display: flex; height: 16px; flex: none; background: #dfe3e8; border-bottom: 1px solid #a7acb3; }
.s1 { width: 56px; line-height: 15px; padding-left: 10px; font-size: 12.500px; border-right: 1px solid #b0b5bc; color: #50545a; display: flex; }
.s2 { width: 54px; background: #fff; line-height: 15px; padding-left: 9px; font-weight: bold; font-size: 12px; color: #3a3d42; display: flex; }
.gap { width: 544px; }
.hsplit { width: 7px; height: 13px; margin-top: 1px; border: 1px solid #8b9098; background: #fff; box-shadow: inset 2px 0 0 #fff, inset 3px 0 0 #aaa; flex: none; }
.hthumb { width: 400px; height: 14px; border: 1px solid #9ba1aa; background: linear-gradient(#fbfcfc, #e4e7ea); display: flex; align-items: center; justify-content: center; gap: 1px; }
.hthumb i { width: 1px; height: 6px; background: #7b8189; }

.status { display: flex; height: 19px; flex: none; background: linear-gradient(#e3e6e8, #c3c8cd); line-height: 18px; font-size: 12px; align-items: stretch; }
.ready { width: 45px; padding-left: 6px; border-right: 1px solid #a4a9b0; margin-right: 1007px; display: flex; }
.pct { padding-left: 8px; width: 39px; display: flex; }

.cursor { position: absolute; left: 278px; top: 522px; z-index: 3; }
</style>
